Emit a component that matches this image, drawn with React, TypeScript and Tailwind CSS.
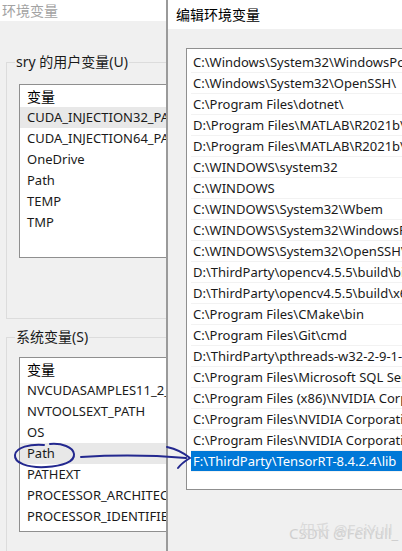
const userVars = [
  "CUDA_INJECTION32_PATH",
  "CUDA_INJECTION64_PATH",
  "OneDrive",
  "Path",
  "TEMP",
  "TMP",
];

const sysVars = [
  "NVCUDASAMPLES11_2_ROOT",
  "NVTOOLSEXT_PATH",
  "OS",
  "Path",
  "PATHEXT",
  "PROCESSOR_ARCHITECTURE",
  "PROCESSOR_IDENTIFIER",
];

const paths = [
  "C:\\Windows\\System32\\WindowsPowerShell\\v1.0\\",
  "C:\\Windows\\System32\\OpenSSH\\",
  "C:\\Program Files\\dotnet\\",
  "D:\\Program Files\\MATLAB\\R2021b\\runtime\\win64",
  "D:\\Program Files\\MATLAB\\R2021b\\bin",
  "C:\\WINDOWS\\system32",
  "C:\\WINDOWS",
  "C:\\WINDOWS\\System32\\Wbem",
  "C:\\WINDOWS\\System32\\WindowsPowerShell\\v1.0\\",
  "C:\\WINDOWS\\System32\\OpenSSH\\",
  "D:\\ThirdParty\\opencv4.5.5\\build\\bin",
  "D:\\ThirdParty\\opencv4.5.5\\build\\x64\\vc15\\bin",
  "C:\\Program Files\\CMake\\bin",
  "C:\\Program Files\\Git\\cmd",
  "D:\\ThirdParty\\pthreads-w32-2-9-1-release\\Pre-built.2\\dll\\x64",
  "C:\\Program Files\\Microsoft SQL Server\\150\\Tools\\Binn\\",
  "C:\\Program Files (x86)\\NVIDIA Corporation\\PhysX\\Common",
  "C:\\Program Files\\NVIDIA Corporation\\NVIDIA NvDLISR",
  "C:\\Program Files\\NVIDIA Corporation\\Nsight Compute 2020.3.0\\",
  "F:\\ThirdParty\\TensorRT-8.4.2.4\\lib",
];

const font = "font-['Noto_Sans','Noto_Sans_CJK_SC',sans-serif]";

const VarList = ({ items, hot, height }: { items: string[]; hot: number; height: string }) => {
  return (
    <div className={`ml-[12px] w-[260px] ${height} bg-white border border-[#8f8f8f]`}>
      <div className="h-[22px] flex items-center pl-[7px] pt-[1px] text-[14px] text-black">变量</div>
      {items.map((v, i) => (
        <div
          key={v + i}
          className={`h-[21px] flex items-center pl-[7px] pt-[1px] text-[13px] text-[#1a1a1a] whitespace-nowrap ${i === hot ? "bg-[#e8e8e8]" : ""}`}
        >
          {v}
        </div>
      ))}
    </div>
  );
};

const GroupBox = ({ label, children, height }: { label: string; children: React.ReactNode; height: string }) => {
  return (
    <div className={`relative ml-[6px] w-[300px] ${height} border border-[#dcdcdc]`}>
      <span className="absolute -top-[11px] left-[8px] px-[1px] bg-[#f0f0f0] text-[14px] text-[#1a1a1a] leading-[20px]">
        {label}
      </span>
      {children}
    </div>
  );
};

export default function App() {
  return (
    <div className={`relative w-[402px] h-[551px] overflow-hidden flex bg-[#f0f0f0] ${font}`}>
      {/* 环境变量 */}
      <div className="w-[166px] shrink-0 overflow-hidden flex flex-col">
        <div className="h-[29px] bg-white flex items-center pl-[2px] text-[14px] text-[#a3a3a3]">环境变量</div>
        <div className="flex-1 pt-[41px]">
          <GroupBox label="sry 的用户变量(U)" height="h-[257px]">
            <div className="pt-[21px]">
              <VarList items={userVars} hot={0} height="h-[174px]" />
            </div>
          </GroupBox>
          <div className="h-[18px]" />
          <GroupBox label="系统变量(S)" height="h-[230px]">
            <div className="pt-[19px]">
              <VarList items={sysVars} hot={3} height="h-[175px]" />
            </div>
          </GroupBox>
        </div>
      </div>

      {/* 编辑环境变量 */}
      <div className="flex-1 flex flex-col border-l-2 border-[#9a9a9a] min-w-0">
        <div className="h-[29px] bg-white flex items-center pl-[8px] text-[14px] text-black">编辑环境变量</div>
        <div className="flex-1 pt-[19px] pl-[18px]">
          <div className="h-[442px] w-[300px] bg-white border border-[#8f8f8f] pt-[3px] pl-[4px]">
            {paths.map((p, i) => (
              <div
                key={p}
                className={`h-[21px] flex items-center pl-[2px] pt-[1px] text-[13px] whitespace-nowrap overflow-hidden border-b border-[#f2f2f2] ${
                  i === paths.length - 1 ? "bg-[#0078d7] text-white" : "text-[#1a1a1a]"
                }`}
              >
                {p}
              </div>
            ))}
          </div>
        </div>
      </div>

      {/* 手绘标注 */}
      <svg className="absolute inset-0 pointer-events-none" width="402" height="551" viewBox="0 0 402 551">
        <path
          d="M44 445 C30 444 16 447 15 455 C14 463 28 468 46 467 C62 466 75 462 74 454 C73 447 62 443 50 444"
          fill="none"
          stroke="#23288f"
          strokeWidth="2"
          strokeLinecap="round"
        />
        <path d="M81 457 C115 455 150 455 186 458" fill="none" stroke="#23288f" strokeWidth="2" strokeLinecap="round" />
        <path d="M167 447 C176 449 184 453 190 458 C185 461 181 464 178 468" fill="none" stroke="#23288f" strokeWidth="2" strokeLinecap="round" strokeLinejoin="round" />
      </svg>

      {/* 水印 */}
      <div className="absolute left-[289px] top-[524px] text-[15px] leading-[18px] text-[#cfcfcf] whitespace-nowrap">
        CSDN @FeiYull_
      </div>
      <div className="absolute left-[300px] top-[520px] text-[15px] leading-[18px] text-[#dadada] whitespace-nowrap">
        知乎 @FeiYull
      </div>
    </div>
  );
}
